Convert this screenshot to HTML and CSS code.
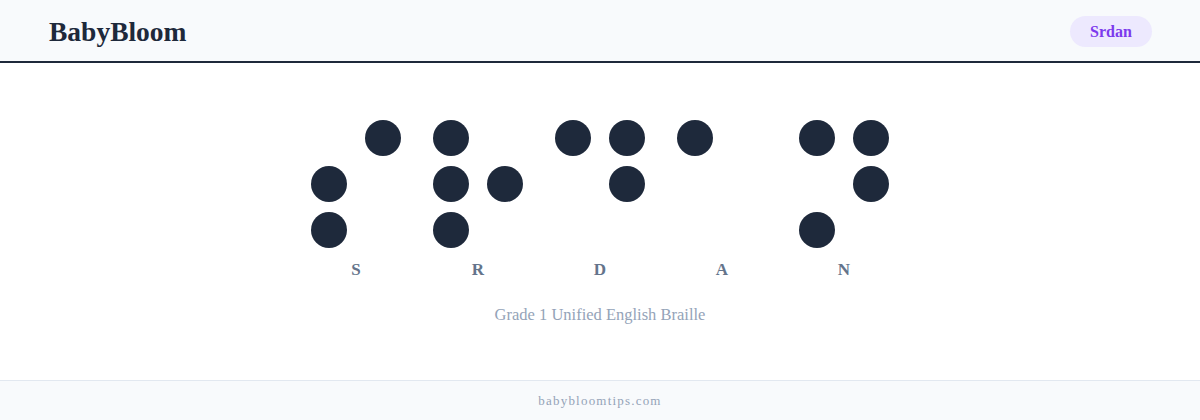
FILE: index.html
```html
<!DOCTYPE html>
<html lang="en">
<head>
<meta charset="utf-8">
<title>BabyBloom – Srdan in Braille</title>
<link rel="stylesheet" href="styles.css">
</head>
<body>
<header class="topbar">
  <div class="logo">BabyBloom</div>
  <div class="name-pill">Srdan</div>
</header>
<main class="content">
  <div class="braille">
    <div class="cell-wrap">
      <div class="cell">
        <span class="dot"></span><span class="dot on"></span>
        <span class="dot on"></span><span class="dot"></span>
        <span class="dot on"></span><span class="dot"></span>
      </div>
      <div class="letter">S</div>
    </div>
    <div class="cell-wrap">
      <div class="cell">
        <span class="dot on"></span><span class="dot"></span>
        <span class="dot on"></span><span class="dot on"></span>
        <span class="dot on"></span><span class="dot"></span>
      </div>
      <div class="letter">R</div>
    </div>
    <div class="cell-wrap">
      <div class="cell">
        <span class="dot on"></span><span class="dot on"></span>
        <span class="dot"></span><span class="dot on"></span>
        <span class="dot"></span><span class="dot"></span>
      </div>
      <div class="letter">D</div>
    </div>
    <div class="cell-wrap">
      <div class="cell">
        <span class="dot on"></span><span class="dot"></span>
        <span class="dot"></span><span class="dot"></span>
        <span class="dot"></span><span class="dot"></span>
      </div>
      <div class="letter">A</div>
    </div>
    <div class="cell-wrap">
      <div class="cell">
        <span class="dot on"></span><span class="dot on"></span>
        <span class="dot"></span><span class="dot on"></span>
        <span class="dot on"></span><span class="dot"></span>
      </div>
      <div class="letter">N</div>
    </div>
  </div>
  <p class="caption">Grade 1 Unified English Braille</p>
</main>
<footer class="footer">babybloomtips.com</footer>
</body>
</html>
```
FILE: styles.css
```css
* { box-sizing: border-box; }
html, body { margin: 0; padding: 0; }
body {
  min-height: 420px;
  display: flex;
  flex-direction: column;
  background: #ffffff;
  font-family: "Liberation Serif", "DejaVu Serif", serif;
  color: #1e293b;
}
.topbar {
  height: 63px;
  display: flex;
  align-items: center;
  justify-content: space-between;
  padding: 2px 48px 0 49px;
  background: #f8fafc;
  border-bottom: 2px solid #1e293b;
}
.logo {
  font-size: 27.5px;
  font-weight: 700;
  color: #1e293b;
  margin-top: 1px;
}
.name-pill {
  height: 31px;
  width: 82px;
  display: flex;
  align-items: center;
  justify-content: center;
  border-radius: 16px;
  background: #ede9fe;
  color: #7c3aed;
  font-size: 16px;
  font-weight: 700;
}
.content {
  flex: 1;
  display: flex;
  flex-direction: column;
  align-items: center;
  padding-top: 57px;
}
.braille {
  display: flex;
  gap: 32px;
}
.cell-wrap {
  display: flex;
  flex-direction: column;
  align-items: center;
}
.cell {
  display: grid;
  grid-template-columns: 36px 36px;
  grid-auto-rows: 36px;
  column-gap: 18px;
  row-gap: 10px;
}
.dot {
  width: 36px;
  height: 36px;
  border-radius: 50%;
}
.dot.on { background: #1e293b; }
.letter {
  margin-top: 12px;
  height: 20px;
  line-height: 20px;
  font-size: 17px;
  font-weight: 700;
  color: #64748b;
}
.caption {
  margin: 25px 0 0;
  line-height: 20px;
  font-size: 16.5px;
  color: #94a3b8;
}
.footer {
  height: 40px;
  display: flex;
  align-items: center;
  justify-content: center;
  background: #f8fafc;
  border-top: 1px solid #e2e8f0;
  font-size: 13px;
  letter-spacing: 1.2px;
  color: #94a3b8;
}
```
